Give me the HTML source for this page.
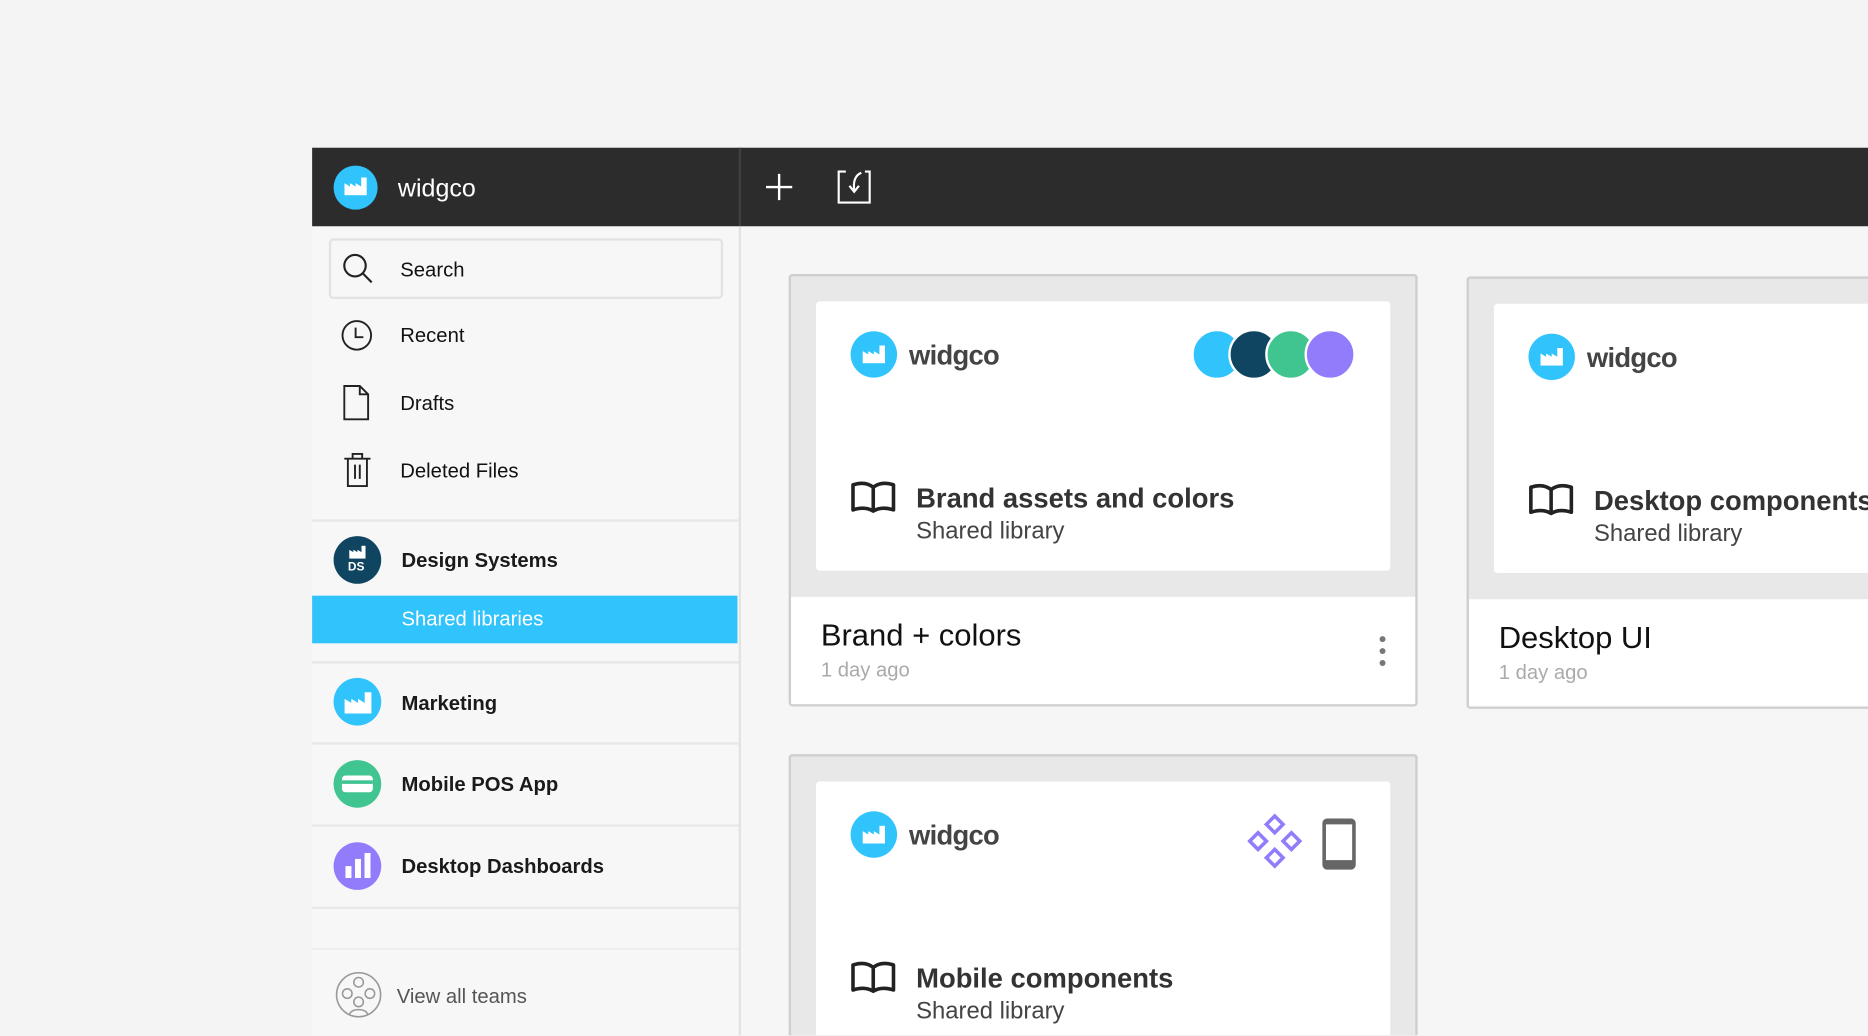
<!DOCTYPE html>
<html><head><meta charset="utf-8">
<style>
html,body{margin:0;padding:0;width:1868px;height:1036px;overflow:hidden;background:#f4f4f4;font-family:"Liberation Sans",sans-serif;}
#w{position:fixed;left:0;top:0;width:1868px;height:1036px;overflow:hidden;}
#s{position:absolute;left:0;top:0;width:1568px;height:869px;transform:scale(1.19133);transform-origin:0 0;overflow:hidden;}
.a{position:absolute;}
.hdr{left:262px;top:124px;width:1306px;height:66px;background:#2c2c2c;}
.side{left:262px;top:190px;width:358px;height:680px;background:#f7f7f7;border-right:2px solid #e3e3e3;}
.main{left:622px;top:190px;width:946px;height:680px;background:#f6f6f6;}
.t{position:absolute;white-space:nowrap;line-height:1;}
.hr{position:absolute;left:262px;width:358px;height:2px;background:#e8e8e8;}
.card{position:absolute;border:2px solid #cfcfcf;border-radius:3px;background:#e8e8e8;overflow:hidden;}
.inner{position:absolute;left:21px;top:21px;width:482px;height:226px;background:#fff;border-radius:3px;}
.bot{position:absolute;left:0;top:269px;width:100%;height:100px;background:#fff;}
.tm{font-size:17px;font-weight:bold;color:#1a1a1a;}
</style></head><body>
<div id="w">
<div id="s">
<svg width="0" height="0" style="position:absolute"><defs>
<symbol id="fac" viewBox="0 0 20 16"><path d="M0 16V5L5 8V5L10 8V5L15 8V0H20V16Z" fill="#fff"/></symbol>
<symbol id="book" viewBox="0 0 38 28"><path d="M2 3C8 1 14 1 19 5C24 1 30 1 36 3V24C30 22 24 22 19 25C14 22 8 22 2 24Z M19 5V25" fill="none" stroke="#222" stroke-width="3" stroke-linejoin="round"/></symbol>
</defs></svg>

<div class="a hdr"></div>
<div class="a" style="left:620px;top:124px;width:2px;height:66px;background:#3f3f3f"></div>
<div class="a" style="left:280px;top:139px;width:37px;height:37px;border-radius:50%;background:#31c3fc"></div>
<svg class="a" style="left:289px;top:149px" width="19" height="15"><use href="#fac"/></svg>
<div class="t" style="left:334px;top:148px;font-size:21px;color:#fff">widgco</div>
<svg class="a" style="left:642px;top:145px" width="24" height="24"><path d="M12 1V23M1 12H23" stroke="#fff" stroke-width="2"/></svg>
<svg class="a" style="left:702px;top:142px" width="30" height="30"><path d="M8 2H2V28H28V2H24 M21 3C16 5 14 10 15 18 M11 14L15 19L19 14" fill="none" stroke="#fff" stroke-width="1.8"/></svg>

<div class="a side"></div>
<div class="a main"></div>

<div class="a" style="left:276px;top:200px;width:327px;height:47px;border:2px solid #e3e3e3;border-radius:4px;background:#f7f7f7"></div>
<svg class="a" style="left:287px;top:212px" width="28" height="28"><circle cx="11" cy="11" r="9" fill="none" stroke="#222" stroke-width="1.8"/><path d="M17.5 17.5L25 25" stroke="#222" stroke-width="1.8"/></svg>
<div class="t" style="left:336px;top:218px;font-size:17px;color:#111">Search</div>

<svg class="a" style="left:286px;top:268px" width="28" height="28"><circle cx="13.5" cy="13.5" r="12" fill="none" stroke="#222" stroke-width="1.6"/><path d="M12.5 7V15H19" fill="none" stroke="#222" stroke-width="1.6"/></svg>
<div class="t" style="left:336px;top:273px;font-size:17px;color:#111">Recent</div>
<svg class="a" style="left:288px;top:323px" width="24" height="30"><path d="M1 1H14L21 8V29H1Z M14 1V8H21" fill="none" stroke="#222" stroke-width="1.6"/></svg>
<div class="t" style="left:336px;top:330px;font-size:17px;color:#111">Drafts</div>
<svg class="a" style="left:288px;top:380px" width="26" height="30"><path d="M1 5H23 M8 5V1H16V5 M4 5V28H20V5 M10 10V22 M14 10V22" fill="none" stroke="#222" stroke-width="1.6"/></svg>
<div class="t" style="left:336px;top:387px;font-size:17px;color:#111">Deleted Files</div>

<div class="hr" style="top:436px"></div>
<div class="a" style="left:280px;top:450px;width:40px;height:40px;border-radius:50%;background:#0f4560"></div>
<svg class="a" style="left:293px;top:458px" width="14" height="11"><use href="#fac"/></svg>
<div class="t" style="left:292px;top:472px;font-size:10px;font-weight:bold;color:#fff">DS</div>
<div class="t tm" style="left:337px;top:462px">Design Systems</div>
<div class="a" style="left:262px;top:500px;width:357px;height:40px;background:#31c3fc"></div>
<div class="t" style="left:337px;top:511px;font-size:17px;color:#fff">Shared libraries</div>
<div class="hr" style="top:555px"></div>
<div class="a" style="left:280px;top:569px;width:40px;height:40px;border-radius:50%;background:#31c3fc"></div>
<svg class="a" style="left:289px;top:581px" width="23" height="18"><use href="#fac"/></svg>
<div class="t tm" style="left:337px;top:582px">Marketing</div>
<div class="hr" style="top:623px"></div>
<div class="a" style="left:280px;top:638px;width:40px;height:40px;border-radius:50%;background:#40c490"></div>
<div class="a" style="left:287px;top:651px;width:26px;height:14px;border-radius:3px;background:#fff"></div>
<div class="a" style="left:287px;top:655px;width:26px;height:3px;background:#40c490"></div>
<div class="t tm" style="left:337px;top:650px">Mobile POS App</div>
<div class="hr" style="top:692px"></div>
<div class="a" style="left:280px;top:707px;width:40px;height:40px;border-radius:50%;background:#927cfc"></div>
<div class="a" style="left:290px;top:727px;width:5px;height:10px;background:#fff"></div>
<div class="a" style="left:298px;top:721px;width:5px;height:16px;background:#fff"></div>
<div class="a" style="left:306px;top:716px;width:5px;height:21px;background:#fff"></div>
<div class="t tm" style="left:337px;top:719px">Desktop Dashboards</div>
<div class="hr" style="top:761px"></div>
<div class="hr" style="top:796px;height:1px"></div>
<svg class="a" style="left:281px;top:815px" width="40" height="40" fill="none" stroke="#999" stroke-width="1.3"><circle cx="20" cy="20" r="18.5"/><circle cx="20" cy="9.5" r="4"/><circle cx="10.5" cy="19" r="4"/><circle cx="29.5" cy="19" r="4"/><circle cx="20" cy="26" r="4"/><path d="M12.5 37C12.5 31 27.5 31 27.5 37"/></svg>
<div class="t" style="left:333px;top:828px;font-size:17px;color:#555">View all teams</div>

<div class="card" style="left:662px;top:230px;width:524px;height:359px">
 <div class="inner">
  <div class="a" style="left:29px;top:25px;width:39px;height:39px;border-radius:50%;background:#31c3fc"></div>
  <svg class="a" style="left:39px;top:37px" width="19" height="15"><use href="#fac"/></svg>
  <div class="t" style="left:78px;top:34px;font-size:23px;font-weight:bold;color:#444;letter-spacing:-0.6px">widgco</div>
  <div class="a" style="left:317px;top:25px;width:39px;height:39px;border-radius:50%;background:#31c3fc;border:2px solid #fff;margin:-2px"></div>
  <div class="a" style="left:348px;top:25px;width:39px;height:39px;border-radius:50%;background:#0f4560;border:2px solid #fff;margin:-2px"></div>
  <div class="a" style="left:379px;top:25px;width:39px;height:39px;border-radius:50%;background:#40c490;border:2px solid #fff;margin:-2px"></div>
  <div class="a" style="left:412px;top:25px;width:39px;height:39px;border-radius:50%;background:#927cfc;border:2px solid #fff;margin:-2px"></div>
  <svg class="a" style="left:29px;top:151px" width="38" height="28"><use href="#book"/></svg>
  <div class="t" style="left:84px;top:154px;font-size:23px;font-weight:bold;color:#333">Brand assets and colors</div>
  <div class="t" style="left:84px;top:183px;font-size:20px;color:#444">Shared library</div>
 </div>
 <div class="bot">
  <div class="t" style="left:25px;top:19px;font-size:26px;color:#111">Brand + colors</div>
  <div class="t" style="left:25px;top:53px;font-size:17px;color:#aaa">1 day ago</div>
  <div class="a" style="left:494px;top:33px;width:5px;height:5px;border-radius:50%;background:#777"></div>
  <div class="a" style="left:494px;top:43px;width:5px;height:5px;border-radius:50%;background:#777"></div>
  <div class="a" style="left:494px;top:53px;width:5px;height:5px;border-radius:50%;background:#777"></div>
 </div>
</div>

<div class="card" style="left:1231px;top:232px;width:524px;height:359px">
 <div class="inner">
  <div class="a" style="left:29px;top:25px;width:39px;height:39px;border-radius:50%;background:#31c3fc"></div>
  <svg class="a" style="left:39px;top:37px" width="19" height="15"><use href="#fac"/></svg>
  <div class="t" style="left:78px;top:34px;font-size:23px;font-weight:bold;color:#444;letter-spacing:-0.6px">widgco</div>
  <svg class="a" style="left:29px;top:151px" width="38" height="28"><use href="#book"/></svg>
  <div class="t" style="left:84px;top:154px;font-size:23px;font-weight:bold;color:#333">Desktop components</div>
  <div class="t" style="left:84px;top:183px;font-size:20px;color:#444">Shared library</div>
 </div>
 <div class="bot">
  <div class="t" style="left:25px;top:19px;font-size:26px;color:#111">Desktop UI</div>
  <div class="t" style="left:25px;top:53px;font-size:17px;color:#aaa">1 day ago</div>
 </div>
</div>

<div class="card" style="left:662px;top:633px;width:524px;height:234px">
 <div class="inner" style="height:240px">
  <div class="a" style="left:29px;top:25px;width:39px;height:39px;border-radius:50%;background:#31c3fc"></div>
  <svg class="a" style="left:39px;top:37px" width="19" height="15"><use href="#fac"/></svg>
  <div class="t" style="left:78px;top:34px;font-size:23px;font-weight:bold;color:#444;letter-spacing:-0.6px">widgco</div>
  <svg class="a" style="left:361px;top:26px" width="48" height="48" fill="none" stroke="#927cfc" stroke-width="3"><path d="M24 3L31 10L24 17L17 10Z M10 17L17 24L10 31L3 24Z M38 17L45 24L38 31L31 24Z M24 31L31 38L24 45L17 38Z"/></svg>
  <div class="a" style="left:425px;top:31px;border:3px solid #666;border-top-width:5px;border-bottom-width:8px;border-radius:4px;box-sizing:border-box;width:28px;height:43px;background:#fff"></div>
  <svg class="a" style="left:29px;top:151px" width="38" height="28"><use href="#book"/></svg>
  <div class="t" style="left:84px;top:154px;font-size:23px;font-weight:bold;color:#333">Mobile components</div>
  <div class="t" style="left:84px;top:183px;font-size:20px;color:#444">Shared library</div>
 </div>
</div>
</div>
</div>
</body></html>
